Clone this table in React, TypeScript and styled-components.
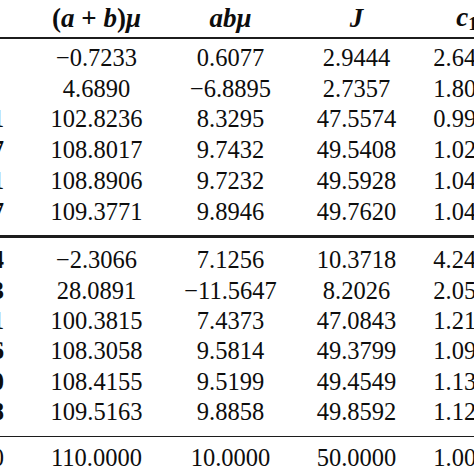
import React from 'react';
import styled, { createGlobalStyle } from 'styled-components';

type Row = [string, string, string, string, string];

const GlobalStyle = createGlobalStyle`
  html, body {
    margin: 0;
    padding: 0;
    background: #ffffff;
  }
`;

const Page = styled.div`
  width: 474px;
  height: 474px;
  overflow: hidden;
  background: #ffffff;
  color: #0d0d0d;
  font-family: 'Liberation Serif', 'Times New Roman', serif;
  font-size: 24.5px;
`;

// the first column of the table is cut off by the crop on the left
const Table = styled.div`
  margin-left: -120px;
  width: 640px;
`;

const Line = styled.div<{ $h: number }>`
  display: grid;
  grid-template-columns: 150px 133px 135px 117px 104px;
  align-items: center;
  height: ${(p) => p.$h}px;
  white-space: nowrap;
`;

const HeaderLine = styled(Line)`
  font-weight: bold;
  font-size: 27px;
`;

const Group = styled.div<{ $rule: number; $top: number; $bottom: number }>`
  border-top: ${(p) => p.$rule}px solid #1c1c1c;
  padding: ${(p) => p.$top}px 0 ${(p) => p.$bottom}px;
`;

const Cell = styled.div`
  text-align: center;
  line-height: 1;
`;

const Label = styled.div<{ $bold?: boolean }>`
  text-align: right;
  padding-right: 126px;
  margin-right: -100px;
  line-height: 1;
  font-weight: ${(p) => (p.$bold ? 'bold' : 'normal')};
`;

const Sub = styled.sub`
  font-size: 0.7em;
  font-style: normal;
  vertical-align: -0.2em;
`;

const groupOne: Row[] = [
  ['', '−0.7233', '0.6077', '2.9444', '2.6412'],
  ['', '4.6890', '−6.8895', '2.7357', '1.8037'],
  ['0.9641', '102.8236', '8.3295', '47.5574', '0.9952'],
  ['0.9857', '108.8017', '9.7432', '49.5408', '1.0248'],
  ['0.9861', '108.8906', '9.7232', '49.5928', '1.0431'],
  ['0.9887', '109.3771', '9.8946', '49.7620', '1.0476'],
];

const groupTwo: Row[] = [
  ['0.7214', '−2.3066', '7.1256', '10.3718', '4.2417'],
  ['0.8323', '28.0891', '−11.5647', '8.2026', '2.0583'],
  ['0.9731', '100.3815', '7.4373', '47.0843', '1.2126'],
  ['0.9846', '108.3058', '9.5814', '49.3799', '1.0915'],
  ['0.9850', '108.4155', '9.5199', '49.4549', '1.1307'],
  ['0.9878', '109.5163', '9.8858', '49.8592', '1.1262'],
];

const truth: Row = ['100', '110.0000', '10.0000', '50.0000', '1.0000'];

function DataLine({ row, h, bold = true }: { row: Row; h: number; bold?: boolean }) {
  return (
    <Line $h={h}>
      <Label $bold={bold}>{row[0]}</Label>
      <Cell>{row[1]}</Cell>
      <Cell>{row[2]}</Cell>
      <Cell>{row[3]}</Cell>
      <Cell>{row[4]}</Cell>
    </Line>
  );
}

export default function App() {
  return (
    <Page>
      <GlobalStyle />
      <Table>
        <HeaderLine $h={37}>
          <Label $bold />
          <Cell>
            (<i>a</i> + <i>b</i>)<i>μ</i>
          </Cell>
          <Cell>
            <i>abμ</i>
          </Cell>
          <Cell>
            <i>J</i>
          </Cell>
          <Cell>
            <i>c</i>
            <Sub>1</Sub>
          </Cell>
        </HeaderLine>

        <Group $rule={2} $top={3.6} $bottom={7.6}>
          {groupOne.map((r, i) => (
            <DataLine key={i} row={r} h={30.8} />
          ))}
        </Group>

        <Group $rule={3} $top={7.6} $bottom={8.6}>
          {groupTwo.map((r, i) => (
            <DataLine key={i} row={r} h={30.3} />
          ))}
        </Group>

        <Group $rule={1.5} $top={6} $bottom={0}>
          <DataLine row={truth} h={30.8} bold={false} />
        </Group>
      </Table>
    </Page>
  );
}
